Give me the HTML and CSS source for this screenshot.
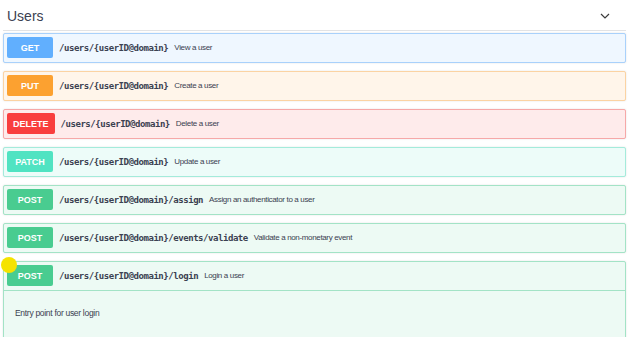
FILE: index.html
```html
<!DOCTYPE html>
<html lang="en">
<head>
    <meta charset="UTF-8">
    <meta name="viewport" content="width=device-width, initial-scale=1.0">
    <title>Users API</title>
    <link rel="stylesheet" href="styles.css">
</head>
<body>
    <div class="tag">
        <div class="tag-header">
            <h3>Users</h3>
            <svg class="chevron" width="10" height="6" viewBox="0 0 10 6">
                <path d="M1 1 L5 5 L9 1" fill="none" stroke="#3b3b3b" stroke-width="1.2"/>
            </svg>
        </div>

        <div class="op op-get">
            <div class="summary">
                <span class="method">GET</span>
                <span class="path">/users/{userID@domain}</span>
                <span class="desc">View a user</span>
            </div>
        </div>

        <div class="op op-put">
            <div class="summary">
                <span class="method">PUT</span>
                <span class="path">/users/{userID@domain}</span>
                <span class="desc">Create a user</span>
            </div>
        </div>

        <div class="op op-delete">
            <div class="summary">
                <span class="method">DELETE</span>
                <span class="path">/users/{userID@domain}</span>
                <span class="desc">Delete a user</span>
            </div>
        </div>

        <div class="op op-patch">
            <div class="summary">
                <span class="method">PATCH</span>
                <span class="path">/users/{userID@domain}</span>
                <span class="desc">Update a user</span>
            </div>
        </div>

        <div class="op op-post">
            <div class="summary">
                <span class="method">POST</span>
                <span class="path">/users/{userID@domain}/assign</span>
                <span class="desc">Assign an authenticator to a user</span>
            </div>
        </div>

        <div class="op op-post">
            <div class="summary">
                <span class="method">POST</span>
                <span class="path">/users/{userID@domain}/events/validate</span>
                <span class="desc">Validate a non-monetary event</span>
            </div>
        </div>

        <div class="op op-post is-open">
            <div class="summary">
                <span class="method">POST</span>
                <span class="path">/users/{userID@domain}/login</span>
                <span class="desc">Login a user</span>
            </div>
            <div class="op-body">
                <p>Entry point for user login</p>
            </div>
        </div>
    </div>

    <!-- click highlight from the screen recorder -->
    <span class="cursor-dot"></span>
</body>
</html>
```

FILE: styles.css
```css
body {
    margin: 0;
    font-family: "Liberation Sans", Arial, sans-serif;
    color: #3b4151;
    background: #fff;
    overflow: hidden;
}

.tag {
    padding: 0 4px 0 3px;
}

.tag-header {
    display: flex;
    align-items: center;
    justify-content: space-between;
    height: 30px;
    border-bottom: 1px solid #e2e3e5;
    margin-bottom: 2px;
}

.tag-header h3 {
    margin: 2px 0 0 4px;
    font-size: 14px;
    font-weight: normal;
    color: #3b4151;
}

.chevron {
    margin-right: 16px;
    margin-top: 2px;
}

.op {
    border: 1px solid;
    border-radius: 2px;
    margin-bottom: 8px;
    box-shadow: 0 0 2px rgba(0, 0, 0, 0.12);
}

.summary {
    display: flex;
    align-items: center;
    padding: 3px 3px 4px;
    height: 21px;
}

.method {
    min-width: 46px;
    height: 21px;
    padding: 0 6px;
    box-sizing: border-box;
    display: flex;
    align-items: center;
    justify-content: center;
    border-radius: 2px;
    color: #fff;
    font-size: 9px;
    font-weight: bold;
}

.path {
    margin-left: 6px;
    font-family: "DejaVu Sans Mono", monospace;
    font-size: 9px;
    font-weight: bold;
    letter-spacing: -0.45px;
    color: #3b4151;
}

.desc {
    margin-left: 6px;
    font-size: 8px;
    letter-spacing: -0.35px;
    color: #3b4151;
}

.op-get { background: #eff7ff; border-color: #a9d1fb; }
.op-get .method { background: #61affe; }

.op-put { background: #fff5ea; border-color: #fbd3a3; }
.op-put .method { background: #fca130; }

.op-delete { background: #feebeb; border-color: #f6a8a8; }
.op-delete .method { background: #f93e3e; }

.op-patch { background: #edfcf9; border-color: #a4ebdb; }
.op-patch .method { background: #50e3c2; }

.op-post { background: #edfaf4; border-color: #a3e3c6; }
.op-post .method { background: #49cc90; }

.is-open .summary {
    border-bottom: 1px solid #a3e3c6;
}

.op-body {
    padding: 17px 11px 30px;
}

.op-body p {
    margin: 0;
    font-size: 8.5px;
    letter-spacing: -0.3px;
}

.cursor-dot {
    position: absolute;
    left: 1px;
    top: 257px;
    width: 16px;
    height: 16px;
    border-radius: 50%;
    background: #f5e300;
}
```
